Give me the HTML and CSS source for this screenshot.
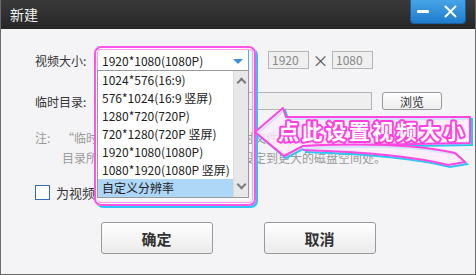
FILE: index.html
```html
<!DOCTYPE html>
<html lang="zh-CN">
<head>
    <meta charset="UTF-8">
    <title>新建</title>
    <link rel="stylesheet" href="styles.css">
</head>
<body>
    <div class="dialog">
        <div class="titlebar">
            <span class="title">新建</span>
            <div class="win-btns">
                <span class="win-btn win-min"><span class="min-bar"></span></span>
                <span class="win-btn win-close">
                    <svg width="13" height="13" viewBox="0 0 13 13">
                        <path d="M1.5 1.5 L11.5 11.5 M11.5 1.5 L1.5 11.5" stroke="#fff" stroke-width="2" stroke-linecap="round"/>
                    </svg>
                </span>
            </div>
        </div>

        <div class="content">
            <div class="row row-size">
                <span class="label">视频大小:</span>
                <div class="combo">
                    <span class="combo-value">1920*1080(1080P)</span>
                    <span class="combo-arrow"></span>
                    <div class="combo-list">
                        <ul class="options">
                            <li>1024*576(16:9)</li>
                            <li>576*1024(16:9 竖屏)</li>
                            <li>1280*720(720P)</li>
                            <li>720*1280(720P 竖屏)</li>
                            <li>1920*1080(1080P)</li>
                            <li>1080*1920(1080P 竖屏)</li>
                            <li class="selected">自定义分辨率</li>
                        </ul>
                        <div class="scrollbar">
                            <span class="chev chev-up"></span>
                            <span class="chev chev-down"></span>
                        </div>
                    </div>
                </div>
                <div class="num num-w">1920</div>
                <span class="times">×</span>
                <div class="num">1080</div>
            </div>

            <div class="row row-dir">
                <span class="label">临时目录:</span>
                <div class="path-input"></div>
                <button class="btn-browse">浏览</button>
            </div>

            <div class="note">
                <span class="note-head">注:</span>
                <span class="note-text">“临时目录”用于存放处理中的临时文件，当临时<br>目录所在磁盘空间不足时，请将其设定到更大的磁盘空间处。</span>
            </div>

            <label class="check-row">
                <span class="checkbox"></span>
                <span class="check-label">为视频启用硬件加速</span>
            </label>

            <div class="actions">
                <button class="btn">确定</button>
                <button class="btn">取消</button>
            </div>
        </div>

        <!-- hint callout drawn over the form -->
        <svg class="callout" width="226" height="72" viewBox="0 0 226 72">
            <g transform="translate(2,2)" fill="none" stroke="#2ec6f4" stroke-width="2">
                <path d="M4 32 L32 8 L35 17 L219 17 L219 43 L52 46 L33 56 Z"/>
                <path d="M52 46 Q150 41 204 53 L214 62 L197 65 Q150 53 52 50"/>
            </g>
            <path d="M4 32 L32 8 L35 17 L219 17 L219 43 L52 46 L33 56 Z" fill="rgba(255,236,252,0.78)" stroke="#ff45e2" stroke-width="2" stroke-linejoin="round"/>
            <path d="M52 46 Q150 41 204 53 L214 62 L197 65 Q150 53 52 50" fill="rgba(255,236,252,0.8)" stroke="#ff45e2" stroke-width="2" stroke-linejoin="round"/>
            <text class="callout-text" x="120" y="39" text-anchor="middle" textLength="186">点此设置视频大小</text>
        </svg>
    </div>
</body>
</html>
```

FILE: styles.css
```css
* {
    box-sizing: border-box;
}
body {
    margin: 0;
    background: #f4f4f6;
    font-family: "Noto Sans CJK SC", "Noto Sans", sans-serif;
    font-size: 12px;
    color: #333;
}
.dialog {
    position: relative;
    width: 476px;
    height: 275px;
    background: #f4f4f6;
    border: 1px solid #6a6a6a;
    border-top: none;
    overflow: hidden;
}
.titlebar {
    height: 29px;
    background: linear-gradient(#3a3a3a, #262626);
    display: flex;
    align-items: flex-start;
    justify-content: space-between;
    padding-left: 9px;
}
.title {
    color: #f2f2f2;
    font-size: 14px;
    line-height: 29px;
}
.win-btns {
    display: flex;
    margin-right: 10px;
    height: 23px;
    border-radius: 0 0 3px 3px;
    overflow: hidden;
    background: linear-gradient(#46a4e6, #1f7ccd);
    box-shadow: 0 0 0 1px #1b5f9e;
}
.win-btn {
    display: flex;
    align-items: center;
    justify-content: center;
    height: 23px;
}
.win-min {
    width: 24px;
}
.min-bar {
    width: 12px;
    height: 3px;
    background: #fff;
    border-radius: 1px;
}
.win-close {
    width: 30px;
}
.content {
    padding: 19px 0 0 34px;
}
.row {
    display: flex;
    align-items: center;
}
.label {
    width: 62px;
    font-size: 12px;
    color: #333;
}
.combo {
    position: relative;
    width: 152px;
    height: 22px;
    background: #fff;
    border: 1px solid #3fb6ea;
    display: flex;
    align-items: center;
    padding-left: 4px;
    z-index: 2;
}
.combo::before {
    content: "";
    position: absolute;
    left: -4px;
    top: -4px;
    width: 158px;
    height: 156px;
    border: 2px solid #ff55e6;
    border-radius: 7px;
    box-shadow: inset 0 0 0 1px #fff, inset 0 0 0 2px #ff9af0, 2px 2px 0 0 #2ec6f4;
    pointer-events: none;
}
.combo-value {
    font-size: 12px;
    color: #222;
}
.combo-arrow {
    position: absolute;
    right: 5px;
    top: 9px;
    width: 0;
    height: 0;
    border-left: 5px solid transparent;
    border-right: 5px solid transparent;
    border-top: 5px solid #3a8fe0;
}
.combo-list {
    position: absolute;
    left: -1px;
    top: 20px;
    width: 152px;
    height: 128px;
    background: #fff;
    border: 1px solid #9a9a9a;
    box-shadow: 0 3px 0 #fafafc;
    display: flex;
}
.options {
    list-style: none;
    margin: 0;
    padding: 0;
    flex: 1;
}
.options li {
    height: 18px;
    line-height: 18px;
    padding-left: 4px;
    font-size: 12px;
    color: #222;
    white-space: nowrap;
}
.options li.selected {
    background: #aed7f7;
}
.scrollbar {
    width: 15px;
    background: #e8e8e8;
    border-left: 1px solid #dcdcdc;
    display: flex;
    flex-direction: column;
    justify-content: space-between;
    align-items: center;
    padding: 6px 0 6px;
}
.chev {
    width: 7px;
    height: 7px;
    border-left: 2px solid #7a7a7a;
    border-top: 2px solid #7a7a7a;
}
.chev-up {
    transform: translateY(2px) rotate(45deg);
}
.chev-down {
    transform: translateY(-3px) rotate(225deg);
}
.num {
    width: 41px;
    height: 18px;
    border: 1px solid #b4b4b4;
    background: #efefef;
    color: #888;
    font-size: 12px;
    line-height: 16px;
    padding-left: 3px;
}
.num-w {
    margin-left: 19px;
}
.times {
    width: 23px;
    text-align: center;
    font-size: 16px;
    color: #555;
}
.row-dir {
    margin-top: 20px;
}
.path-input {
    width: 275px;
    height: 18px;
    border: 1px solid #b4b4b4;
    background: #efefef;
}
.btn-browse {
    margin-left: 10px;
    width: 60px;
    height: 18px;
    padding: 0;
    border: 1px solid #9a9a9a;
    border-radius: 3px;
    background: linear-gradient(#fefefe, #ececec);
    font-family: inherit;
    font-size: 12px;
    color: #333;
}
.note {
    display: flex;
    margin-top: 18px;
    color: #9a9a9a;
    font-size: 12px;
    line-height: 20px;
}
.note-head {
    width: 27px;
}
.note-text {
    white-space: nowrap;
}
.check-row {
    display: flex;
    align-items: center;
    margin-top: 16px;
    height: 16px;
}
.checkbox {
    width: 15px;
    height: 15px;
    border: 1px solid #2f6db5;
    background: #fff;
}
.check-label {
    margin-left: 6px;
    font-size: 13px;
    color: #333;
}
.actions {
    display: flex;
    justify-content: center;
    gap: 51px;
    margin-top: 22px;
    margin-left: -34px;
}
.btn {
    width: 112px;
    height: 32px;
    border: 1px solid #9a9a9a;
    border-radius: 3px;
    background: linear-gradient(#fefefe, #ebebeb);
    font-family: inherit;
    font-size: 15px;
    font-weight: bold;
    color: #333;
}
.callout {
    position: absolute;
    left: 250px;
    top: 100px;
    z-index: 3;
}
.callout-text {
    font-family: "Noto Sans CJK SC", sans-serif;
    font-size: 21px;
    font-weight: bold;
    fill: #fff;
    stroke: #ff3fe0;
    stroke-width: 4px;
    paint-order: stroke;
    stroke-linejoin: round;
}
```
